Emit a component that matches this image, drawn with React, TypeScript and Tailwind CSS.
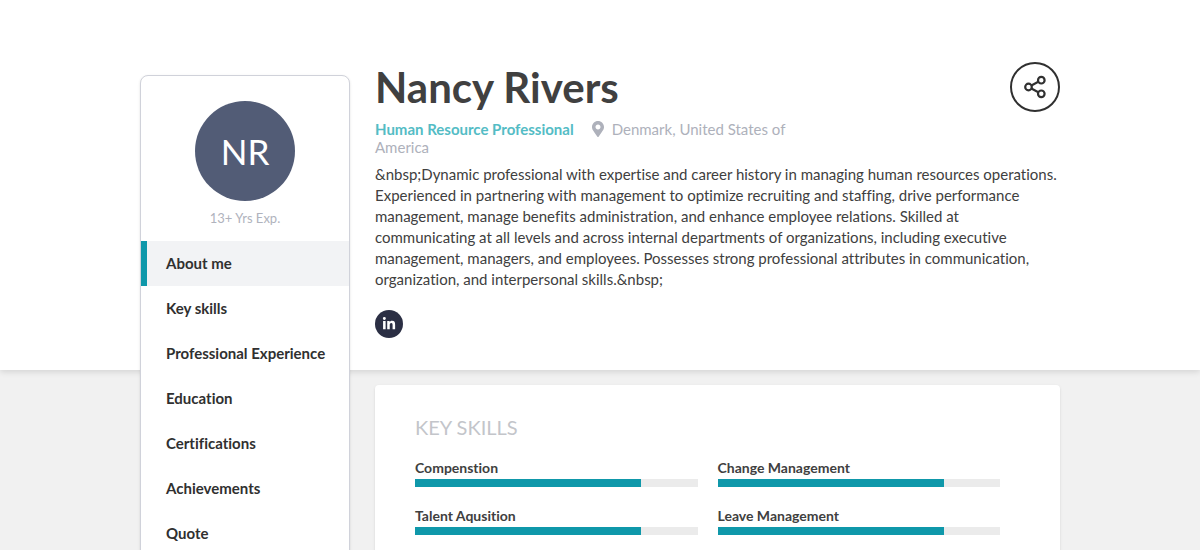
import { FaLinkedinIn, FaMapMarkerAlt } from "react-icons/fa";

const sections = [
  "About me",
  "Key skills",
  "Professional Experience",
  "Education",
  "Certifications",
  "Achievements",
  "Quote",
];

const skills = [
  { name: "Compenstion", level: 80 },
  { name: "Change Management", level: 80 },
  { name: "Talent Aqusition", level: 80 },
  { name: "Leave Management", level: 80 },
];

const summary =
  "&nbsp;Dynamic professional with expertise and career history in managing human resources operations. Experienced in partnering with management to optimize recruiting and staffing, drive performance management, manage benefits administration, and enhance employee relations. Skilled at communicating at all levels and across internal departments of organizations, including executive management, managers, and employees. Possesses strong professional attributes in communication, organization, and interpersonal skills.&nbsp;";

function ShareIcon() {
  return (
    <svg viewBox="0 0 24 24" className="h-6 w-6" fill="none" stroke="currentColor" strokeWidth="2.2" aria-hidden="true">
      <circle cx="5.5" cy="12" r="3.3" />
      <circle cx="18.3" cy="5.2" r="3.3" />
      <circle cx="18.3" cy="18.8" r="3.3" />
      <path d="M8.4 10.4 15.3 6.8M8.4 13.6l6.9 3.6" />
    </svg>
  );
}

function Sidebar() {
  return (
    <aside className="z-10 col-start-2 row-span-2 row-start-1 mt-[75px] mb-6 self-start rounded-lg border border-[#d0d2da] bg-white pt-[25px] pb-6 shadow-sm">
      <div className="flex flex-col items-center">
        <div className="flex h-[100px] w-[100px] items-center justify-center rounded-full bg-[#525c76] text-[35px] text-white">
          NR
        </div>
        <p className="mt-[7px] mb-[13px] text-[13px] leading-5 text-[#b0b3bd]">13+ Yrs Exp.</p>
      </div>
      <nav>
        <ul>
          {sections.map((section, i) => (
            <li key={section}>
              <a
                href="#"
                className={
                  i === 0
                    ? "block border-l-6 border-[#0f98aa] bg-[#f2f3f5] pl-[19px] text-[15px] leading-[45px] font-bold"
                    : "block pl-[25px] text-[15px] leading-[45px] font-bold"
                }
              >
                {section}
              </a>
            </li>
          ))}
        </ul>
      </nav>
    </aside>
  );
}

function Intro() {
  return (
    <header className="col-start-3 row-start-1 pt-[62px] pb-8 pl-[25px]">
      <div className="flex items-start justify-between">
        <div>
          <h1 className="text-[42px] leading-[50px] font-bold text-[#404040]">Nancy Rivers</h1>
          <p className="mt-2 max-w-[450px] text-[15px] leading-[18px] text-[#aeb1bb]">
            <strong className="mr-[18px] font-bold text-[#54bcc5]">Human Resource Professional</strong>
            <FaMapMarkerAlt className="mr-2 inline h-4 w-3 align-[-2px]" />
            Denmark, United States of America
          </p>
        </div>
        <button
          type="button"
          aria-label="Share profile"
          className="flex h-[50px] w-[50px] shrink-0 items-center justify-center rounded-full border-2 border-[#303030]"
        >
          <ShareIcon />
        </button>
      </div>
      <p className="mt-2 text-[15px] leading-[21px] text-[#404040]">{summary}</p>
      <a
        href="#"
        aria-label="LinkedIn"
        className="mt-5 flex h-7 w-7 items-center justify-center rounded-full bg-[#2b2f44] text-white"
      >
        <FaLinkedinIn className="h-[14px] w-[14px]" />
      </a>
    </header>
  );
}

function KeySkills() {
  return (
    <main className="col-start-3 row-start-2 pt-[15px] pb-6 pl-[25px]">
      <section className="rounded bg-white px-10 pt-[30px] pb-10 shadow-sm">
        <h2 className="text-xl leading-6 text-[#c3c5ca]">KEY SKILLS</h2>
        <div className="mt-[18px] mr-5 grid grid-cols-2 gap-[18px] gap-x-5">
          {skills.map((skill) => (
            <div key={skill.name}>
              <h3 className="text-sm leading-[22px] font-bold text-[#404040]">{skill.name}</h3>
              <div className="h-2 bg-[#ebebeb]">
                <div className="h-full bg-[#0f98aa]" style={{ width: `${skill.level}%` }} />
              </div>
            </div>
          ))}
        </div>
      </section>
    </main>
  );
}

export default function App() {
  return (
    <div className="grid min-h-screen grid-cols-[minmax(16px,1fr)_210px_minmax(0,710px)_minmax(16px,1fr)] grid-rows-[auto_1fr] bg-[#f1f1f1] font-[Lato,sans-serif] text-[#303030] [font-variant-ligatures:none]">
      {/* White band behind the intro */}
      <div className="col-span-full row-start-1 bg-white shadow-[0_2px_6px_rgba(0,0,0,0.12)]" />
      <Intro />
      <Sidebar />
      <KeySkills />
    </div>
  );
}
